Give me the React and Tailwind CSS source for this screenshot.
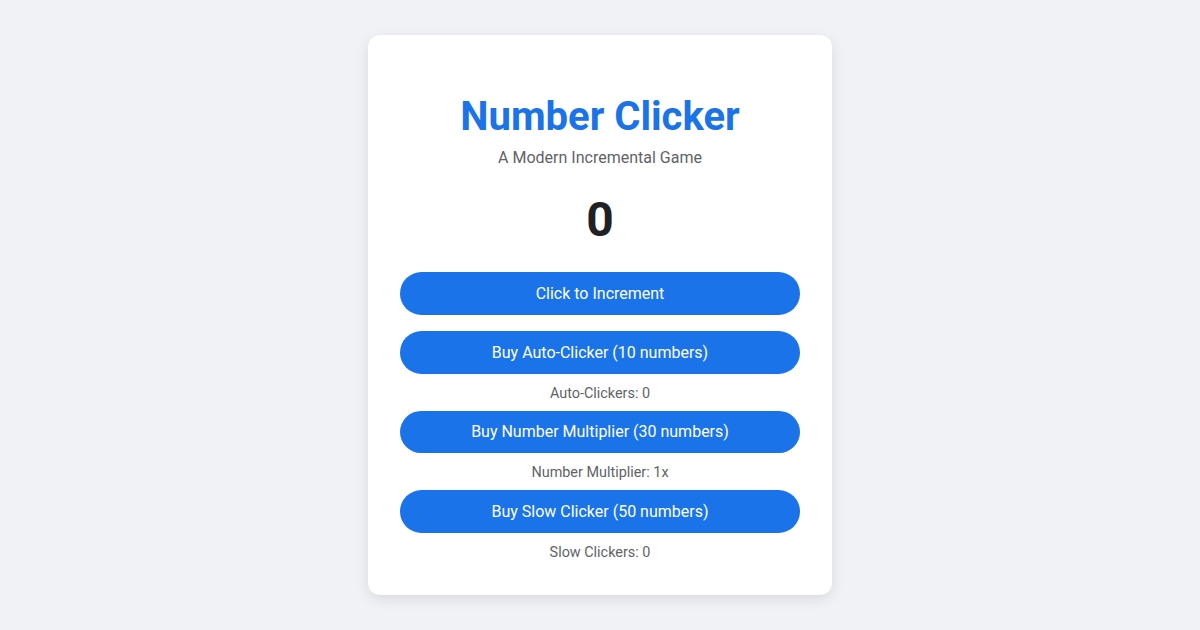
import { useState, useEffect } from "react";

const COSTS = { auto: 10, multiplier: 30, slow: 50 };

export default function App() {
  const [count, setCount] = useState(0);
  const [autoClickers, setAutoClickers] = useState(0);
  const [multiplier, setMultiplier] = useState(1);
  const [slowClickers, setSlowClickers] = useState(0);

  // auto-clickers tick every second, slow clickers every five
  useEffect(() => {
    if (autoClickers === 0) return;
    const t = setInterval(() => setCount((c) => c + autoClickers * multiplier), 1000);
    return () => clearInterval(t);
  }, [autoClickers, multiplier]);

  useEffect(() => {
    if (slowClickers === 0) return;
    const t = setInterval(() => setCount((c) => c + slowClickers * multiplier), 5000);
    return () => clearInterval(t);
  }, [slowClickers, multiplier]);

  const buy = (cost, apply) => {
    if (count < cost) return;
    setCount((c) => c - cost);
    apply();
  };

  const btn =
    "w-full h-[43px] rounded-full bg-[#1a73e8] hover:bg-[#1765cc] text-white text-[16px] leading-[19px] cursor-pointer";
  const stat = "text-[14.4px] leading-[20px] text-[#5f6368]";

  return (
    <div
      className="min-h-screen bg-[#f0f2f5] flex justify-center pt-[35px]"
      style={{ fontFamily: "Roboto, 'Liberation Sans', sans-serif" }}
    >
      <div className="w-[464px] h-[560px] bg-white rounded-[12px] shadow-[0_4px_14px_rgba(0,0,0,0.1)] px-8 pt-[58px] pb-8 flex flex-col items-center text-center">
        <h1 className="text-[40px] leading-[48px] font-bold text-[#1a73e8]">Number Clicker</h1>
        <p className="mt-[5px] text-[16px] leading-[24px] text-[#5f6368]">A Modern Incremental Game</p>
        <div className="mt-[22px] text-[48px] leading-[56px] font-bold text-[#202124]">{count}</div>

        <button className={`${btn} mt-[24px]`} onClick={() => setCount((c) => c + multiplier)}>
          Click to Increment
        </button>

        <button className={`${btn} mt-4`} onClick={() => buy(COSTS.auto, () => setAutoClickers((n) => n + 1))}>
          Buy Auto-Clicker (10 numbers)
        </button>
        <p className={`${stat} mt-[10px]`}>Auto-Clickers: {autoClickers}</p>

        <button className={`${btn} mt-[7px]`} onClick={() => buy(COSTS.multiplier, () => setMultiplier((m) => m + 1))}>
          Buy Number Multiplier (30 numbers)
        </button>
        <p className={`${stat} mt-[10px]`}>Number Multiplier: {multiplier}x</p>

        <button className={`${btn} mt-[7px]`} onClick={() => buy(COSTS.slow, () => setSlowClickers((n) => n + 1))}>
          Buy Slow Clicker (50 numbers)
        </button>
        <p className={`${stat} mt-[10px]`}>Slow Clickers: {slowClickers}</p>
      </div>
    </div>
  );
}
